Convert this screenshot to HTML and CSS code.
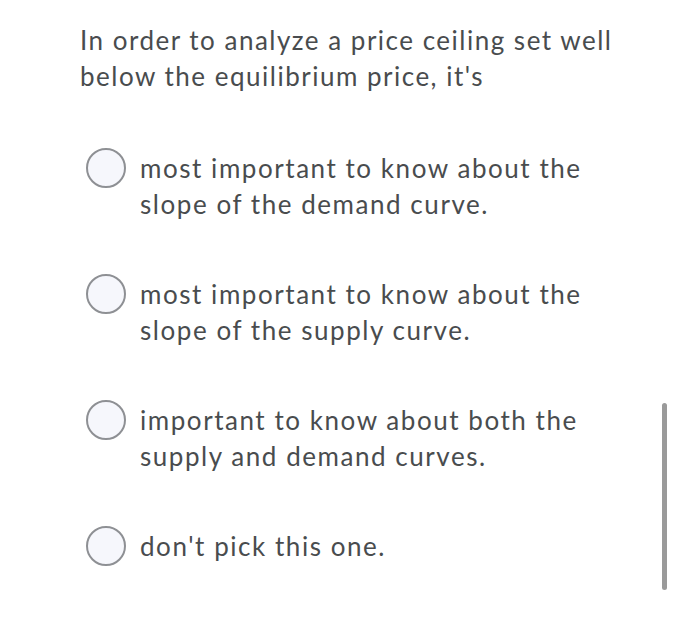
FILE: index.html
```html
<!DOCTYPE html>
<html>
<head>
<meta charset="utf-8">
<link rel="stylesheet" href="styles.css">
</head>
<body>
<div class="page">
  <div class="question">In order to analyze a price ceiling set well below the equilibrium price, it's</div>
  <div class="options">
    <div class="option"><span class="radio"></span><span class="label">most important to know about the slope of the demand curve.</span></div>
    <div class="option"><span class="radio"></span><span class="label">most important to know about the slope of the supply curve.</span></div>
    <div class="option"><span class="radio"></span><span class="label">important to know about both the supply and demand curves.</span></div>
    <div class="option"><span class="radio"></span><span class="label">don't pick this one.</span></div>
  </div>
  <div class="scrollbar"></div>
</div>
</body>
</html>
```
FILE: styles.css
```css
html, body {
  margin: 0;
  padding: 0;
  background: #ffffff;
}
body {
  font-family: Lato, "Open Sans", sans-serif;
  color: #494c4e;
}
.page {
  position: relative;
  width: 700px;
  height: 643px;
  padding: 22px 0 0 80px;
  box-sizing: border-box;
}
.question {
  width: 570px;
  font-size: 26px;
  line-height: 36px;
  letter-spacing: 1.5px;
}
.options {
  margin-top: 56px;
  display: flex;
  flex-direction: column;
  gap: 54px;
  padding-left: 6px;
}
.option {
  display: flex;
  align-items: flex-start;
  gap: 14px;
}
.radio {
  flex: none;
  width: 36px;
  height: 36px;
  margin-top: -2px;
  border: 2px solid #8e9094;
  border-radius: 50%;
  background: #f6f7fc;
}
.label {
  width: 470px;
  font-size: 26px;
  line-height: 36px;
  letter-spacing: 1.55px;
}
.scrollbar {
  position: absolute;
  left: 662px;
  top: 403px;
  width: 5px;
  height: 187px;
  border-radius: 3px;
  background: #9a9a9a;
}
```
